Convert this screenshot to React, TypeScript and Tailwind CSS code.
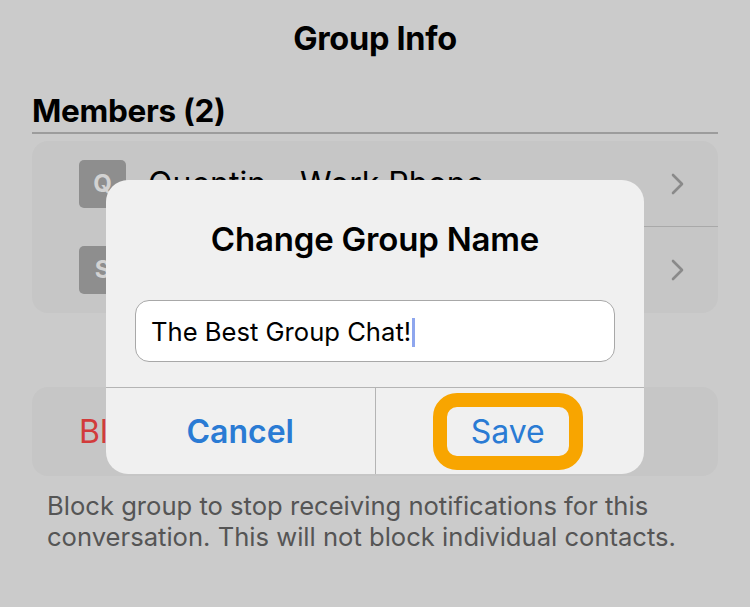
interface Member {
  initial: string;
  name: string;
}

const members: Member[] = [
  { initial: "Q", name: "Quentin – Work Phone" },
  { initial: "S", name: "Sarah" },
];

const Chevron = () => (
  <svg width="16" height="24" viewBox="0 0 16 24" fill="none" className="mr-[32px]">
    <path d="M3 3l9 9-9 9" stroke="#8a8a8a" strokeWidth="2.6" strokeLinecap="round" strokeLinejoin="round" />
  </svg>
);

const MemberRow = ({ member, last }: { member: Member; last: boolean }) => (
  <div className="flex h-[86px] items-center">
    <div className="ml-[47px] flex h-[48px] w-[47px] shrink-0 items-center justify-center rounded-[5px] bg-[#8e8e8e] text-[24px] font-bold text-[#d2d2d2]">
      {member.initial}
    </div>
    <div
      className={`ml-[-18px] flex h-full flex-1 items-center pl-[40px] ${
        last ? "" : "border-b border-[#a9a9a9]"
      }`}
    >
      <span className="flex-1 text-[32px] text-black">{member.name}</span>
      <Chevron />
    </div>
  </div>
);

export default function App() {
  return (
    <div
      className="relative h-[607px] w-[750px] overflow-hidden bg-[#cbcbcb]"
      style={{ fontFamily: "Inter, 'Noto Sans', sans-serif" }}
    >
      {/* Header */}
      <div className="pt-[20px] text-center text-[32.5px] font-bold leading-[38px] tracking-[-0.3px] text-black">
        Group Info
      </div>

      {/* Members */}
      <div className="px-[32px] pt-[34px]">
        <div className="border-b-2 border-[#9c9c9c] pb-[2px] text-[31.5px] font-bold leading-[38px] tracking-[-0.3px] text-black">
          Members (2)
        </div>
        <div className="mt-[7px] rounded-[16px] bg-[#c6c6c6]">
          {members.map((m, i) => (
            <MemberRow key={m.initial} member={m} last={i === members.length - 1} />
          ))}
        </div>

        {/* Block */}
        <div className="mt-[74px] flex h-[89px] items-center rounded-[16px] bg-[#c6c6c6] pl-[47px] text-[32px] text-[#d23b3b]">
          Block Group
        </div>
        <p className="mt-[14px] px-[15px] text-[25.6px] leading-[31px] text-[#555555]">
          Block group to stop receiving notifications for this conversation. This will not block
          individual contacts.
        </p>
      </div>

      {/* Dialog */}
      <div className="absolute left-[106px] top-[180px] flex h-[294px] w-[538px] flex-col rounded-[22px] bg-[#f0f0f0]">
        <div className="pt-[40px] text-center text-[33px] font-semibold leading-[38px] tracking-[-0.2px] text-black">
          Change Group Name
        </div>
        <div className="mx-[29px] mt-[42px] flex h-[62px] items-center rounded-[14px] border border-[#a8a8a8] bg-white pl-[15px] pt-[2px]">
          <span className="text-[25.6px] text-black">The Best Group Chat!</span>
          <span className="ml-[1px] h-[29px] w-[3px] bg-[#8ea6ee]" />
        </div>
        <div className="mt-[25px] flex flex-1 border-t border-[#b4b4b4]">
          <div className="flex flex-1 items-center justify-center border-r border-[#b4b4b4] pt-[2px] text-[32px] font-semibold text-[#2a7bd4]">
            Cancel
          </div>
          <div className="flex flex-1 items-center justify-center">
            <div className="mr-[4px] flex h-[77px] w-[150px] items-center justify-center rounded-[24px] border-[14px] border-[#f8a500] pt-[1px] text-[32px] text-[#2a7bd4]">
              Save
            </div>
          </div>
        </div>
      </div>
    </div>
  );
}
